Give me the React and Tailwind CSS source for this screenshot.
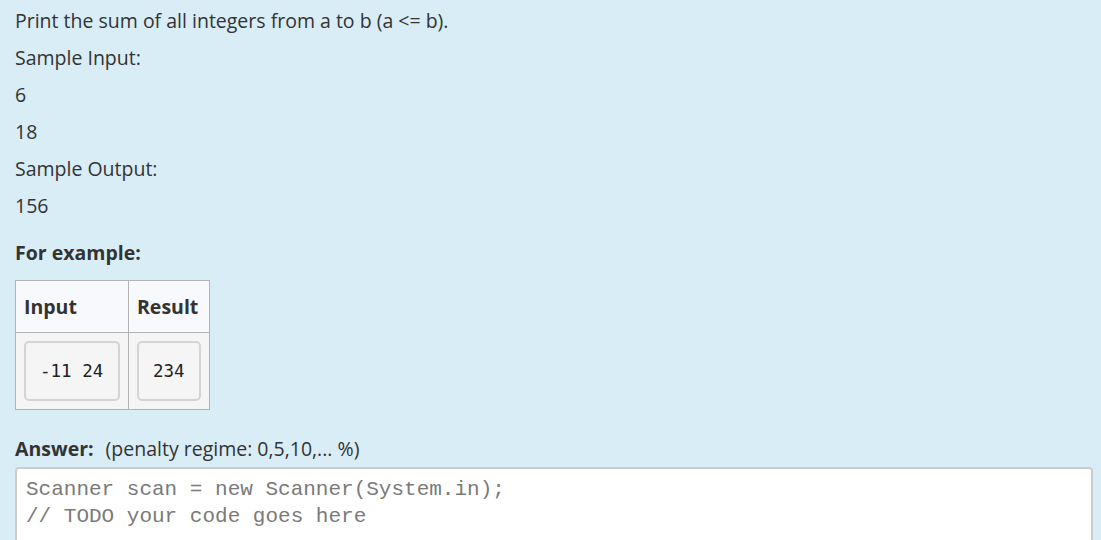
export default function App() {
  const sans = { fontFamily: '"Open Sans", "Noto Sans", sans-serif' };
  return (
    <div className="min-h-[540px] w-full bg-[#d9edf7] px-[15px] pt-[7px] text-[#333333]" style={sans}>
      <div className="text-[19.5px] leading-[27px]">
        <p className="mb-[10px]">Print the sum of all integers from a to b (a &lt;= b).</p>
        <p className="mb-[10px]">Sample Input:</p>
        <p className="mb-[10px]">6</p>
        <p className="mb-[10px]">18</p>
        <p className="mb-[10px]">Sample Output:</p>
        <p className="mb-[10px]">156</p>
      </div>
      <div className="mt-[20px] text-[19.5px] font-bold leading-[27px]">For example:</div>
      <table className="mt-[14px] border-collapse border border-[#b3b3b3] text-[19.5px]">
        <thead>
          <tr className="bg-[#f8f9fd]">
            <th className="h-[52px] w-[113px] border border-[#b3b3b3] px-[8px] text-left font-bold">Input</th>
            <th className="h-[52px] w-[81px] border border-[#b3b3b3] px-[8px] text-left font-bold">Result</th>
          </tr>
        </thead>
        <tbody>
          <tr className="bg-[#f5f5f5]">
            <td className="h-[77px] border border-[#b3b3b3] px-[8px]">
              <div
                className="flex h-[60px] w-[96px] items-center rounded-[5px] border-2 border-[#d4d4d4] pl-[14px] text-[17.5px] text-[#222]"
                style={{ fontFamily: '"DejaVu Sans Mono", monospace' }}
              >
                -11 24
              </div>
            </td>
            <td className="h-[77px] border border-[#b3b3b3] px-[8px]">
              <div
                className="flex h-[60px] w-[64px] items-center rounded-[5px] border-2 border-[#d4d4d4] pl-[14px] text-[17.5px] text-[#222]"
                style={{ fontFamily: '"DejaVu Sans Mono", monospace' }}
              >
                234
              </div>
            </td>
          </tr>
        </tbody>
      </table>
      <div className="mt-[25px] flex text-[19.5px] leading-[27px]">
        <span className="font-bold">Answer:</span>
        <span className="ml-[12px]">(penalty regime: 0,5,10,... %)</span>
      </div>
      <div
        className="mt-[5px] mr-[-7px] h-[120px] rounded-[4px] border-2 border-[#cccccc] bg-white pl-[9px] pt-[7px] text-[21px] leading-[27px] text-[#7a7a7a]"
        style={{ fontFamily: '"Liberation Mono", monospace' }}
      >
        <div className="whitespace-pre">Scanner scan = new Scanner(System.in);</div>
        <div className="whitespace-pre">// TODO your code goes here</div>
      </div>
    </div>
  );
}
